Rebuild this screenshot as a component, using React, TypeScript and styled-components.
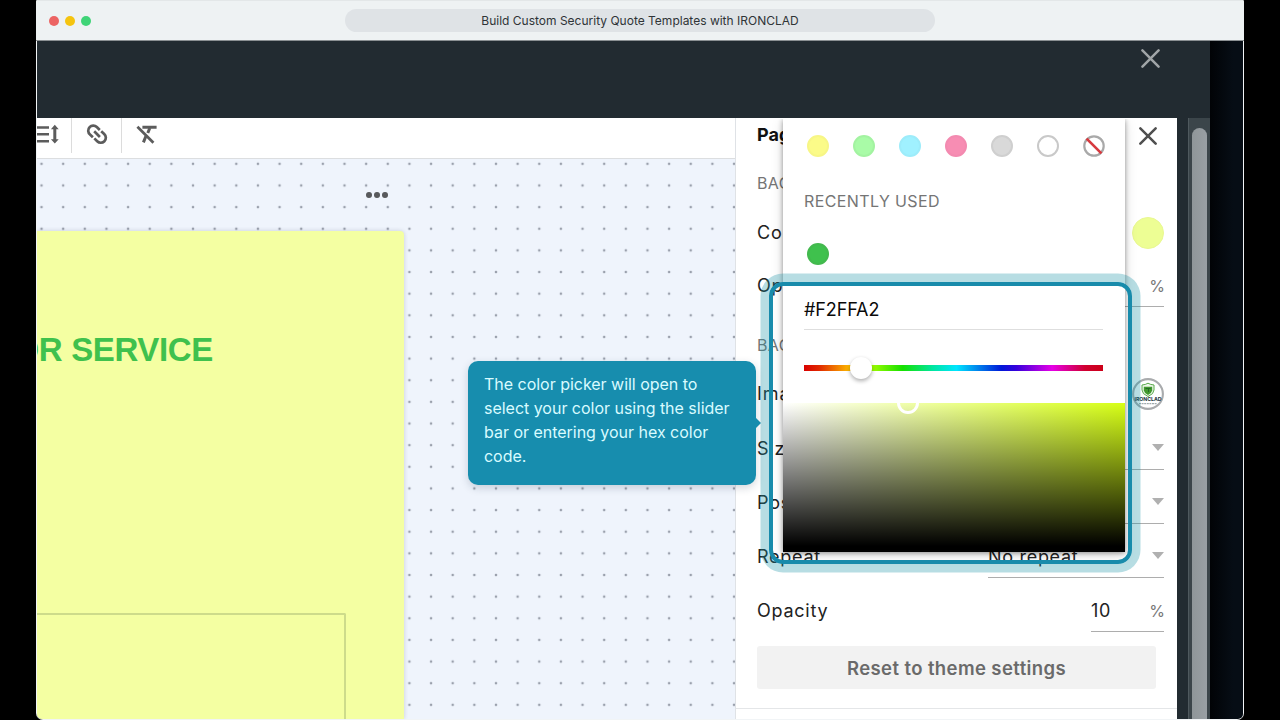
import React from "react";
import styled, { createGlobalStyle } from "styled-components";

const Global = createGlobalStyle`
  * { box-sizing: border-box; }
  body { margin: 0; background: #000; font-family: Inter, "Liberation Sans", sans-serif; overflow: hidden; }
`;

const Window = styled.div`
  width: 1208px;
  height: 720px;
  margin: 0 auto;
  display: flex;
  flex-direction: column;
  background: #f1f4f6;
  border-radius: 2px 2px 7px 7px;
  padding: 0 1px 1px;
  overflow: hidden;
  position: relative;
`;

const TitleBar = styled.header`
  flex: 0 0 41px;
  display: grid;
  grid-template-columns: 1fr 590px 1fr;
  align-items: center;
  background: #eef2f3;
  border-top: 1px solid #e3e7e8;
  border-bottom: 1px solid #8b9093;
  margin: 0 -1px;
`;

const Lights = styled.div`
  display: flex;
  gap: 6px;
  padding-left: 13px;
`;

const Light = styled.span<{ $color: string }>`
  width: 10px;
  height: 10px;
  border-radius: 50%;
  background: ${(p) => p.$color};
`;

const Address = styled.div`
  height: 23px;
  border-radius: 12px;
  background: #dfe3e6;
  color: #2f3437;
  font-size: 12px;
  line-height: 23px;
  letter-spacing: 0;
  text-align: center;
`;

const Viewport = styled.div`
  flex: 1;
  min-height: 0;
  display: flex;
  border-radius: 0 0 5px 5px;
  overflow: hidden;
`;

const Application = styled.div`
  width: 1173px;
  display: flex;
  flex-direction: column;
  background: #222b31;
`;

const Backdrop = styled.div`
  flex: 1;
  background: linear-gradient(90deg, #010306, #060d15 70%);
`;

const AppHeader = styled.div`
  flex: 0 0 77px;
  display: flex;
  justify-content: flex-end;
  padding: 8px 50px 0 0;
`;

const AppBody = styled.div`
  flex: 1;
  min-height: 0;
  display: flex;
`;

const Editor = styled.section`
  width: 698px;
  display: flex;
  flex-direction: column;
`;

const Toolbar = styled.div`
  flex: 0 0 41px;
  display: flex;
  background: #fff;
  border-bottom: 1px solid #dcdee0;
`;

const Tool = styled.div<{ $width: number; $last?: boolean }>`
  width: ${(p) => p.$width}px;
  height: 35px;
  display: flex;
  justify-content: center;
  padding-top: 4px;
  border-right: ${(p) => (p.$last ? "none" : "1px solid #dcdcdc")};
`;

const Canvas = styled.div`
  flex: 1;
  min-height: 0;
  display: flex;
  flex-direction: column;
  background-color: #eff4fc;
  background-image: radial-gradient(circle at center, #9aa0ac 0.8px, rgba(154, 160, 172, 0) 1.7px);
  background-size: 21.65px 21.65px;
  background-position: -6.3px -6px;
`;

const MoreRow = styled.div`
  height: 72px;
  width: 353px;
  display: flex;
  justify-content: flex-end;
  align-items: center;
  gap: 2.4px;
  padding-right: 2px;
`;

const MoreDot = styled.span`
  width: 5.8px;
  height: 5.8px;
  border-radius: 50%;
  background: #58595c;
`;

const Sheet = styled.div`
  flex: 1;
  width: 367px;
  background: #f4ffa2;
  border-radius: 0 4px 0 0;
  box-shadow: 0 0 4px rgba(60, 70, 90, 0.22);
  display: flex;
  flex-direction: column;
  overflow: hidden;
`;

const SheetTitle = styled.h1`
  margin: 0;
  width: 176px;
  height: 382px;
  padding-top: 101px;
  display: flex;
  justify-content: flex-end;
  white-space: nowrap;
  font: 700 33px/36px "Liberation Sans", Arial, sans-serif;
  letter-spacing: -0.35px;
  color: #3fc14d;
`;

const SheetBox = styled.div`
  flex: 1;
  width: 309px;
  border: 2px solid #cddb8b;
  border-left: none;
  border-bottom: none;
  border-radius: 0 2px 0 0;
`;

const Panel = styled.aside`
  width: 442px;
  display: flex;
  flex-direction: column;
  background: #fff;
  border-left: 1px solid #dfe2e6;
  color: #222;
  font-size: 18px;
`;

const PanelHead = styled.div`
  height: 36px;
  flex: none;
  display: flex;
  justify-content: space-between;
  align-items: center;
  padding: 0 20px 0 21px;
  font-weight: 700;
  font-size: 18px;
  color: #111;

  span { padding-bottom: 4px; }
`;

const Heading = styled.div<{ $height: number; $top?: number; $bottom?: number }>`
  flex: none;
  height: ${(p) => p.$height}px;
  padding: ${(p) => p.$top ?? 0}px 0 ${(p) => p.$bottom ?? 0}px 21px;
  display: flex;
  align-items: center;
  font-size: 16px;
  letter-spacing: 0.4px;
  color: #757575;
`;

const SwatchRow = styled.div<{ $height: number }>`
  flex: none;
  height: ${(p) => p.$height}px;
  display: flex;
  justify-content: space-between;
  padding: 0 13px 0 21px;
  line-height: 31px;
  letter-spacing: 0.9px;
`;

const ColorSwatch = styled.span`
  width: 32px;
  height: 32px;
  border-radius: 50%;
  background: #edfe94;
  border: 1.5px solid #e9f892;
`;

const FieldRow = styled.div`
  flex: none;
  height: 54px;
  display: flex;
  justify-content: space-between;
  align-items: flex-end;
  padding: 0 13px 0 21px;
`;

const FieldLabel = styled.span`
  height: 43px;
  line-height: 44px;
  letter-spacing: 0.75px;
`;

const Field = styled.div<{ $width: number }>`
  width: ${(p) => p.$width}px;
  height: 43px;
  display: flex;
  align-items: center;
  justify-content: space-between;
  padding-top: 1px;
  letter-spacing: 0.7px;
  border-bottom: 1.5px solid #adadad;
`;

const Unit = styled.span`
  font-size: 16px;
  letter-spacing: 0;
  color: #777;
  margin-right: -1px;
`;

const Caret = styled.span`
  border: 6.5px solid transparent;
  border-top: 7px solid #b0b0b0;
  border-bottom: none;
  margin-top: -3px;
`;

const ResetButton = styled.button`
  flex: none;
  width: 399px;
  height: 43px;
  margin: 14px 0 0 21px;
  border: none;
  border-radius: 3px;
  background: #f2f2f2;
  color: #6a6a6a;
  padding-top: 2px;
  letter-spacing: 0.4px;
  font: 600 18.5px Inter, sans-serif;
`;

const PanelRule = styled.div`
  height: 1px;
  flex: none;
  margin-top: 19px;
  background: #e4e6e8;
`;

const ScrollTrack = styled.div`
  width: 22px;
  margin-left: 11px;
  padding: 10px 3px 0;
  background: #3b454a;
  border-left: 1px solid #4f595e;
  display: flex;
`;

const ScrollThumb = styled.div`
  flex: 1;
  border-radius: 8px 8px 0 0;
  background: linear-gradient(90deg, #8f9699, #999fa4);
`;

const Picker = styled.div`
  position: absolute;
  left: 747px;
  top: 119px;
  width: 342px;
  height: 433px;
  background: #fff;
  box-shadow: 0 1px 5px rgba(0, 0, 0, 0.38), 0 3px 12px rgba(0, 0, 0, 0.14);
  clip-path: inset(0 -20px -20px -20px);
  display: flex;
  flex-direction: column;
`;

const SwatchList = styled.div<{ $top: number }>`
  display: flex;
  gap: 24px;
  padding: ${(p) => p.$top}px 0 0 24px;
`;

const Swatch = styled.span<{ $color: string; $edge: string }>`
  width: 22px;
  height: 22px;
  border-radius: 50%;
  background: ${(p) => p.$color};
  border: 2px solid ${(p) => p.$edge};
`;

const PickerTitle = styled.div`
  margin: 34px 0 0 21px;
  font-size: 16px;
  line-height: 20px;
  letter-spacing: 0.4px;
  color: #757575;
`;

const HexInput = styled.div`
  margin: 26px 22px 0 21px;
  height: 39px;
  line-height: 37px;
  font-size: 18px;
  letter-spacing: -0.1px;
  color: #0a0a0a;
  border-bottom: 1px solid #dedede;
`;

const HueBar = styled.div`
  flex: none;
  height: 6px;
  margin: 35px 22px 0 21px;
  position: relative;
  background: linear-gradient(90deg, #d90000 0%, #e02800 5%, #ffc400 16%, #a8ff00 22%, #16e000 33%, #00e6a0 43%, #00e5ff 51%, #0018d8 66%, #3600dc 71%, #e600e6 83%, #d00030 94%, #cc0018 100%);
`;

const HueHandle = styled.span`
  position: absolute;
  left: 46px;
  top: -8px;
  width: 22px;
  height: 22px;
  border-radius: 50%;
  background: #fff;
  box-shadow: 0 2px 4px rgba(0, 0, 0, 0.32);
`;

const Saturation = styled.div`
  flex: none;
  height: 149px;
  margin-top: 32px;
  position: relative;
  overflow: hidden;
  background: linear-gradient(180deg, rgba(0, 0, 0, 0) 0%, #000 96%), linear-gradient(90deg, #fff, #d7ff16);
`;

const SaturationHandle = styled.span`
  position: absolute;
  left: 114px;
  top: -11px;
  width: 22px;
  height: 22px;
  border: 3px solid #fff;
  border-radius: 50%;
`;

const Highlight = styled.div`
  position: absolute;
  left: 733px;
  top: 282px;
  width: 363px;
  height: 282px;
  border: 4px solid #188bab;
  border-radius: 14px;
  box-shadow: 0 0 0 8.5px rgba(24, 145, 165, 0.31);
`;

const Tooltip = styled.div`
  position: absolute;
  left: 432px;
  top: 361px;
  width: 288px;
  height: 124px;
  padding: 11px 16px;
  border-radius: 10px;
  background: #178dae;
  color: #d9fbff;
  font-size: 16px;
  line-height: 24px;
  letter-spacing: -0.02px;
  white-space: pre;
  box-shadow: 0 3px 8px rgba(20, 40, 60, 0.18);

  &::after {
    content: "";
    position: absolute;
    left: 288px;
    top: 57px;
    border: 5px solid transparent;
    border-left-color: #178dae;
    border-right: none;
  }
`;

const Cross = ({ size, color, width }: { size: number; color: string; width: number }) => (
  <svg width={size} height={size} viewBox="0 0 20 20" fill="none" stroke={color} strokeWidth={width} strokeLinecap="round">
    <path d="M1.5 1.5 18.5 18.5M18.5 1.5 1.5 18.5" />
  </svg>
);

const SpacingIcon = () => (
  <svg width="34" height="24" viewBox="0 0 34 24" fill="none" stroke="#5c5c5c">
    <path d="M0 5.5H12M0 12.3H12M0 19.2H12" strokeWidth="2.6" />
    <path d="M17.8 5V19" strokeWidth="3" />
    <path d="M13.9 7.2 17.8 2.8 21.7 7.2ZM13.9 17.2 17.8 21.6 21.7 17.2Z" fill="#5c5c5c" stroke="none" />
  </svg>
);

const LinkIcon = () => (
  <svg width="24" height="24" viewBox="0 0 24 24" fill="none" stroke="#5c5c5c" strokeWidth="2.7">
    <path d="M7.9 15.2 5 12.5A5 5 0 0 1 4.6 5.2 5 5 0 0 1 11.8 5L14.8 8" />
    <path d="M16.2 9.2 19.2 12A5 5 0 0 1 19.4 19.2 5 5 0 0 1 12.2 19.2L9.3 16.4" />
    <path d="M9.2 9.3 14.9 15" />
  </svg>
);

const ClearIcon = () => (
  <svg width="24" height="24" viewBox="0 0 24 24" fill="none" stroke="#5c5c5c">
    <path d="M2.4 4.8 18.4 20.8" strokeWidth="2.7" />
    <path d="M7.4 5.3H21.6" strokeWidth="3" />
    <path d="M14.8 6 12.8 11M10.9 14.2 8.4 20.4" strokeWidth="3" />
  </svg>
);

const NoColor = () => (
  <svg width="22" height="22" viewBox="0 0 22 22" fill="none">
    <circle cx="11" cy="11" r="9.7" stroke="#a9a9a9" strokeWidth="2.2" />
    <path d="M3.6 3.6 18.4 18.4" stroke="#d73a3f" strokeWidth="2.7" />
  </svg>
);

const BrandLogo = () => (
  <svg width="32" height="32" viewBox="0 0 32 32">
    <circle cx="16" cy="16" r="14.9" fill="#fff" stroke="#a9abad" strokeWidth="2.1" />
    <path d="M10 7Q13.5 6.8 16 5.2 18.5 6.8 22 7V12Q22 16 16 18.5 10 16 10 12Z" fill="#eef9ea" stroke="#58a94b" strokeWidth="1" />
    <path d="M11.8 8.7H20.2V12.5Q19.5 15.5 16 17 12.5 15.5 11.8 12.5Z" fill="#42992f" />
    <path d="M13.5 10.5H18.5M16.5 10.5V14" stroke="#236b25" strokeWidth="1" />
    <text x="16" y="23.3" textAnchor="middle" textLength="27" lengthAdjust="spacingAndGlyphs" letterSpacing="0" fontFamily="Inter, sans-serif" fontWeight="700" fontSize="5.4" fill="#20333a">IRONCLAD</text>
    <path d="M7 25.7H25" stroke="#8b979b" strokeWidth="1" strokeDasharray="2 .6" />
  </svg>
);

const swatches = [
  ["#fbfb88", "#f7f686"],
  ["#a9fba7", "#a3f3a1"],
  ["#a0f1ff", "#9decfa"],
  ["#f78db3", "#f38ab0"],
  ["#d9d9d9", "#cfcfcf"],
  ["#ffffff", "#c9c9c9"],
];

export default function App() {
  return (
    <>
      <Global />
      <Window>
        <TitleBar>
          <Lights>
            <Light $color="#ec6463" />
            <Light $color="#f5c40f" />
            <Light $color="#3fd477" />
          </Lights>
          <Address>Build Custom Security Quote Templates with IRONCLAD</Address>
        </TitleBar>
        <Viewport>
          <Application>
            <AppHeader>
              <Cross size={19} color="#a0a5a7" width={2.6} />
            </AppHeader>
            <AppBody>
              <Editor>
                <Toolbar>
                  <Tool $width={35}><SpacingIcon /></Tool>
                  <Tool $width={50}><LinkIcon /></Tool>
                  <Tool $width={50} $last><ClearIcon /></Tool>
                </Toolbar>
                <Canvas>
                  <MoreRow><MoreDot /><MoreDot /><MoreDot /></MoreRow>
                  <Sheet>
                    <SheetTitle>OR SERVICE</SheetTitle>
                    <SheetBox />
                  </Sheet>
                </Canvas>
              </Editor>
              <Panel>
                <PanelHead>
                  <span>Page</span>
                  <Cross size={18} color="#505050" width={2.8} />
                </PanelHead>
                <Heading $height={63} $bottom={5}>BACKGROUND</Heading>
                <SwatchRow $height={36}>Color<ColorSwatch /></SwatchRow>
                <FieldRow>
                  <FieldLabel>Opacity</FieldLabel>
                  <Field $width={73}><span /><Unit>%</Unit></Field>
                </FieldRow>
                <Heading $height={71} $top={5}>BACKGROUND</Heading>
                <SwatchRow $height={38}>Image<BrandLogo /></SwatchRow>
                <FieldRow>
                  <FieldLabel>Size</FieldLabel>
                  <Field $width={176}><span /><Caret /></Field>
                </FieldRow>
                <FieldRow>
                  <FieldLabel>Position</FieldLabel>
                  <Field $width={176}><span /><Caret /></Field>
                </FieldRow>
                <FieldRow>
                  <FieldLabel>Repeat</FieldLabel>
                  <Field $width={176}><span>No repeat</span><Caret /></Field>
                </FieldRow>
                <FieldRow>
                  <FieldLabel>Opacity</FieldLabel>
                  <Field $width={73}><span>10</span><Unit>%</Unit></Field>
                </FieldRow>
                <ResetButton>Reset to theme settings</ResetButton>
                <PanelRule />
              </Panel>
              <ScrollTrack><ScrollThumb /></ScrollTrack>
            </AppBody>
          </Application>
          <Backdrop />
        </Viewport>

        <Picker>
          <SwatchList $top={16}>
            {swatches.map(([color, edge]) => <Swatch key={color} $color={color} $edge={edge} />)}
            <NoColor />
          </SwatchList>
          <PickerTitle>RECENTLY USED</PickerTitle>
          <SwatchList $top={32}><Swatch $color="#3fc14d" $edge="#43b94e" /></SwatchList>
          <HexInput>#F2FFA2</HexInput>
          <HueBar><HueHandle /></HueBar>
          <Saturation><SaturationHandle /></Saturation>
        </Picker>
        <Highlight />
        <Tooltip>{"The color picker will open to\nselect your color using the slider\nbar or entering your hex color\ncode."}</Tooltip>
      </Window>
    </>
  );
}
